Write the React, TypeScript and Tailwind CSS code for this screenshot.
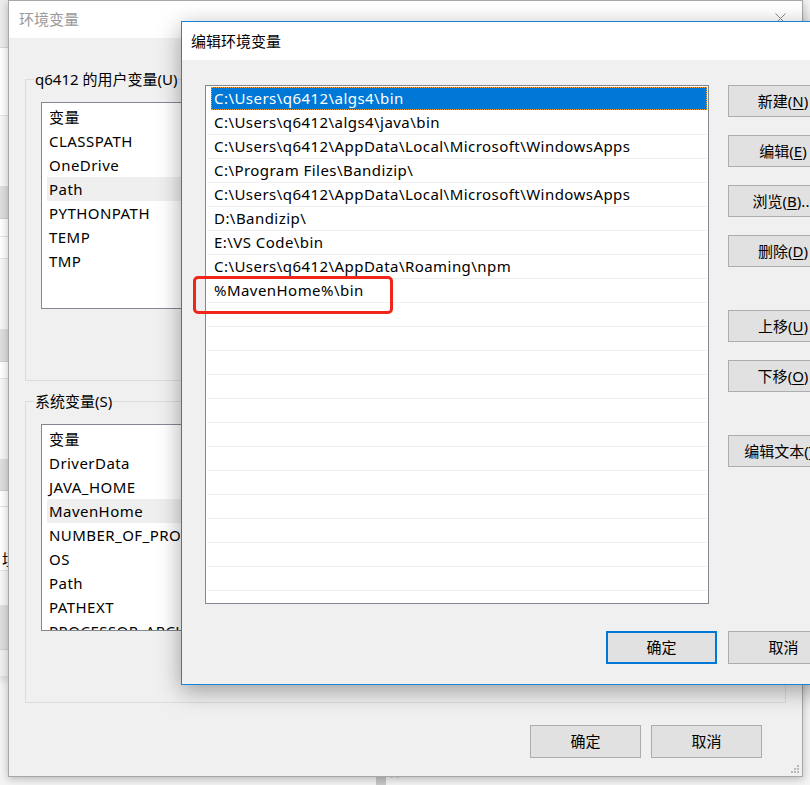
import React from "react";

const userVars = ["变量", "CLASSPATH", "OneDrive", "Path", "PYTHONPATH", "TEMP", "TMP"];
const sysVars = ["变量", "DriverData", "JAVA_HOME", "MavenHome", "NUMBER_OF_PROCESSORS", "OS", "Path", "PATHEXT", "PROCESSOR_ARCHITECTURE"];
const paths = [
  "C:\\Users\\q6412\\algs4\\bin",
  "C:\\Users\\q6412\\algs4\\java\\bin",
  "C:\\Users\\q6412\\AppData\\Local\\Microsoft\\WindowsApps",
  "C:\\Program Files\\Bandizip\\",
  "C:\\Users\\q6412\\AppData\\Local\\Microsoft\\WindowsApps",
  "D:\\Bandizip\\",
  "E:\\VS Code\\bin",
  "C:\\Users\\q6412\\AppData\\Roaming\\npm",
  "%MavenHome%\\bin",
];

function VarList({ items, hl }: { items: string[]; hl: number }) {
  return (
    <div className="ml-[15px] mt-[22px] h-[207px] w-[729px] overflow-hidden border border-[#828790] bg-white pt-[2px] pl-[5px] tracking-[0.45px]">
      {items.map((t, i) => (
        <div
          key={i}
          className={`flex h-[24px] items-center whitespace-nowrap pl-[2px] ${i === hl ? "bg-[#efefef]" : ""}`}
        >
          {t}
        </div>
      ))}
    </div>
  );
}

function Group({ label, items, hl }: { label: string; items: string[]; hl: number }) {
  return (
    <div className="relative h-[302px] w-[761px] border border-[#dcdcdc]">
      <div className="absolute -top-[12px] left-[8px] bg-[#f0f0f0] px-[1px] leading-[22px]">{label}</div>
      <VarList items={items} hl={hl} />
    </div>
  );
}

function Btn({ children, primary }: { children: React.ReactNode; primary?: boolean }) {
  return (
    <div
      className={`flex h-[33px] w-[111px] shrink-0 items-center justify-center bg-[#e1e1e1] ${
        primary ? "border-2 border-[#0078d7]" : "border border-[#adadad]"
      }`}
    >
      {children}
    </div>
  );
}

function SideBtn({ label, k, tail = ")" }: { label: string; k: string; tail?: string }) {
  return (
    <div className="flex h-[32px] w-[110px] shrink-0 items-center justify-center whitespace-nowrap border border-[#adadad] bg-[#e1e1e1]">
      {label}(<span className="underline underline-offset-2">{k}</span>
      {tail}
    </div>
  );
}

export default function App() {
  return (
    <div className="relative h-[785px] w-[810px] overflow-hidden bg-[#f4f4f4] font-['Noto_Sans','Noto_Sans_CJK_SC',sans-serif] text-[15px] text-black">
      {/* window behind, left strip */}
      <div className="absolute left-0 top-0 flex h-[676px] w-[9px] flex-col bg-[#f0f0f0] shadow-[0_4px_8px_rgba(0,0,0,0.15)]">
        <div className="h-[48px] border-b border-[#d9d9d9] bg-[#ececec]" />
        <div className="h-[68px] border-b border-[#e3e3e3] bg-white" />
        <div className="h-[70px] bg-[#f7f7f7]" />
        <div className="h-[33px] border-b border-[#cfcfcf] bg-[#dedede]" />
        <div className="h-[18px] border-b border-[#e3e3e3] bg-white" />
        <div className="h-[22px] border-b border-[#e3e3e3] bg-white" />
        <div className="h-[70px] bg-[#f7f7f7]" />
        <div className="h-[33px] border-b border-[#cfcfcf] bg-[#dedede]" />
        <div className="h-[17px] border-b border-[#e3e3e3] bg-white" />
        <div className="h-[80px] bg-[#f7f7f7]" />
        <div className="h-[32px] border-b border-[#cfcfcf] bg-[#dedede]" />
        <div className="h-[16px] border-b border-[#e3e3e3] bg-white" />
        <div className="flex h-[64px] items-end justify-end overflow-hidden border-b border-[#e3e3e3] bg-white pb-[3px]">
          <span className="-mr-[8px] text-[15px] leading-none">境</span>
        </div>
        <div className="h-[34px] bg-[#f7f7f7]" />
        <div className="h-[45px] border-b border-[#cfcfcf] bg-[#dedede]" />
        <div className="flex-1 bg-[#f0f0f0]" />
      </div>
      <div className="absolute left-[376px] top-[776px] h-[9px] w-[10px] bg-[#c8c8c8]" />
      <div className="absolute left-[390px] top-[772px] text-[12px] leading-none text-[#c0c0c0]">· ·</div>

      {/* back window: 环境变量 */}
      <div className="absolute left-[8px] top-0 flex h-[777px] w-[795px] flex-col border border-[#a8a8a8] bg-[#f0f0f0] shadow-[0_2px_8px_rgba(0,0,0,0.25)]">
        <div className="flex h-[37px] shrink-0 items-center justify-between bg-white pl-[10px] pr-[16px]">
          <span className="text-[#9a9a9a]">环境变量</span>
          <svg width="11" height="11" viewBox="0 0 11 11" className="-mt-[3px]">
            <path d="M0.5 0.5 L10.5 10.5 M10.5 0.5 L0.5 10.5" stroke="#8a8a8a" strokeWidth="1" />
          </svg>
        </div>
        <div className="flex flex-1 flex-col pl-[16px] pt-[41px]">
          <Group label="q6412 的用户变量(U)" items={userVars} hl={3} />
          <div className="mt-[20px]">
            <Group label="系统变量(S)" items={sysVars} hl={3} />
          </div>
          <div className="mt-[22px] flex gap-[10px] pl-[505px]">
            <Btn>确定</Btn>
            <Btn>取消</Btn>
          </div>
        </div>
        <div className="absolute bottom-[3px] right-[3px] grid grid-cols-3 gap-[1px]">
          {[0, 0, 1, 0, 1, 1, 1, 1, 1].map((v, i) => (
            <div key={i} className={`h-[2px] w-[2px] ${v ? "bg-[#b8b8b8]" : ""}`} />
          ))}
        </div>
      </div>

      {/* front dialog: 编辑环境变量 */}
      <div className="absolute left-[181px] top-[21px] flex h-[664px] w-[680px] flex-col border border-[#1883d7] bg-[#f0f0f0] shadow-[0_6px_22px_rgba(0,0,0,0.35)]">
        <div className="flex h-[38px] shrink-0 items-center bg-white pl-[9px]">编辑环境变量</div>
        <div className="flex pl-[23px] pt-[25px]">
          <div className="relative h-[519px] w-[504px] overflow-hidden border border-[#828790] bg-white pt-[1px] tracking-[0.45px]">
            {Array.from({ length: 22 }).map((_, i) => {
              const t = paths[i] ?? "";
              const sel = i === 0;
              return (
                <div key={i} className="h-[24px] pl-[1px] pr-[1px]">
                  {sel ? (
                    <div className="ml-[4px] flex h-[23px] items-center bg-[#0078d7] pl-[3px] text-white outline-1 -outline-offset-1 outline-dotted outline-[#f0a030]">
                      {t}
                    </div>
                  ) : (
                    <div className="flex h-[24px] items-center border-b border-[#f0f0f0] pl-[7px] whitespace-nowrap">{t}</div>
                  )}
                </div>
              );
            })}
          </div>
          <div className="ml-[19px] flex flex-col">
            <SideBtn label="新建" k="N" />
            <div className="mt-[18px]"><SideBtn label="编辑" k="E" /></div>
            <div className="mt-[18px]"><SideBtn label="浏览" k="B" tail=")..." /></div>
            <div className="mt-[18px]"><SideBtn label="删除" k="D" /></div>
            <div className="mt-[43px]"><SideBtn label="上移" k="U" /></div>
            <div className="mt-[18px]"><SideBtn label="下移" k="O" /></div>
            <div className="mt-[43px]"><SideBtn label="编辑文本" k="T" /></div>
          </div>
        </div>
        <div className="mt-[27px] flex gap-[11px] pl-[424px]">
          <Btn primary>确定</Btn>
          <Btn>取消</Btn>
        </div>
        {/* red annotation */}
        <div className="absolute left-[11px] top-[254px] h-[38px] w-[200px] rounded-[5px] border-[3px] border-[#f0261a]" />
      </div>
    </div>
  );
}
